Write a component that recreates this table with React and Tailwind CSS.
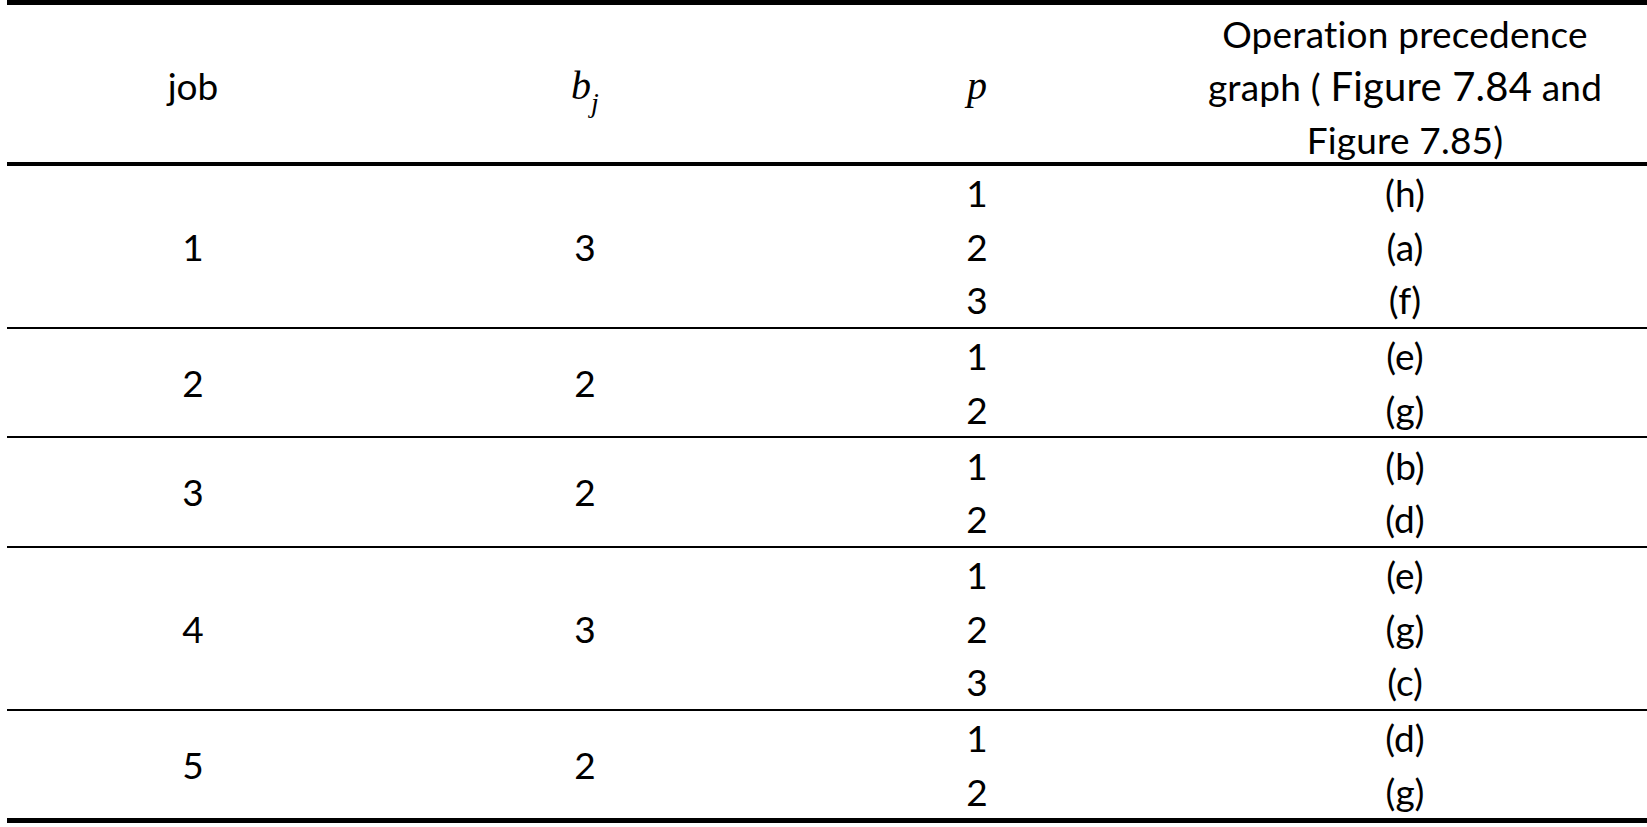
import React from "react";

const groups = [
  { job: "1", b: "3", ops: ["(h)", "(a)", "(f)"] },
  { job: "2", b: "2", ops: ["(e)", "(g)"] },
  { job: "3", b: "2", ops: ["(b)", "(d)"] },
  { job: "4", b: "3", ops: ["(e)", "(g)", "(c)"] },
  { job: "5", b: "2", ops: ["(d)", "(g)"] },
];

const cols = "grid grid-cols-[372px_412px_372px_1fr]";

const App = () => {
  return (
    <div className="w-[1647px] h-[827px] bg-white overflow-hidden text-black font-['Lato','Noto_Sans',sans-serif] text-[37px] [font-variant-ligatures:none] [font-feature-settings:'liga'_0,'clig'_0,'dlig'_0,'calt'_0]">
      <div className="ml-[7px] w-[1640px]">
        {/* top rule */}
        <div className="h-[5px] bg-black" />

        {/* header */}
        <div className={`${cols} h-[157px] items-center text-center`}>
          <div>job</div>
          <div className="font-['Liberation_Serif',serif] italic text-[40px]">
            b<sub className="text-[28px] align-[-6px]">j</sub>
          </div>
          <div className="font-['Liberation_Serif',serif] italic text-[40px]">p</div>
          <div className="leading-[53px] pt-[2px] tracking-[0.2px]">
            Operation precedence
            <br />
            graph ( <span className="text-[40px]">Figure 7.84</span> and
            <br />
            Figure 7.85)
          </div>
        </div>
        <div className="h-[4px] bg-black" />

        {/* body */}
        {groups.map((g, i) => (
          <div key={g.job}>
            {i > 0 && <div className="h-[2px] bg-black" />}
            <div className={`${cols} text-center`}>
              <div className="flex items-center justify-center">{g.job}</div>
              <div className="flex items-center justify-center">{g.b}</div>
              <div className="flex flex-col">
                {g.ops.map((_, k) => (
                  <div key={k} className="h-[53.7px] flex items-center justify-center">
                    {k + 1}
                  </div>
                ))}
              </div>
              <div className="flex flex-col">
                {g.ops.map((op, k) => (
                  <div key={k} className="h-[53.7px] flex items-center justify-center">
                    {op}
                  </div>
                ))}
              </div>
            </div>
          </div>
        ))}

        {/* bottom rule */}
        <div className="h-[5px] bg-black" />
      </div>
    </div>
  );
};

export default App;
